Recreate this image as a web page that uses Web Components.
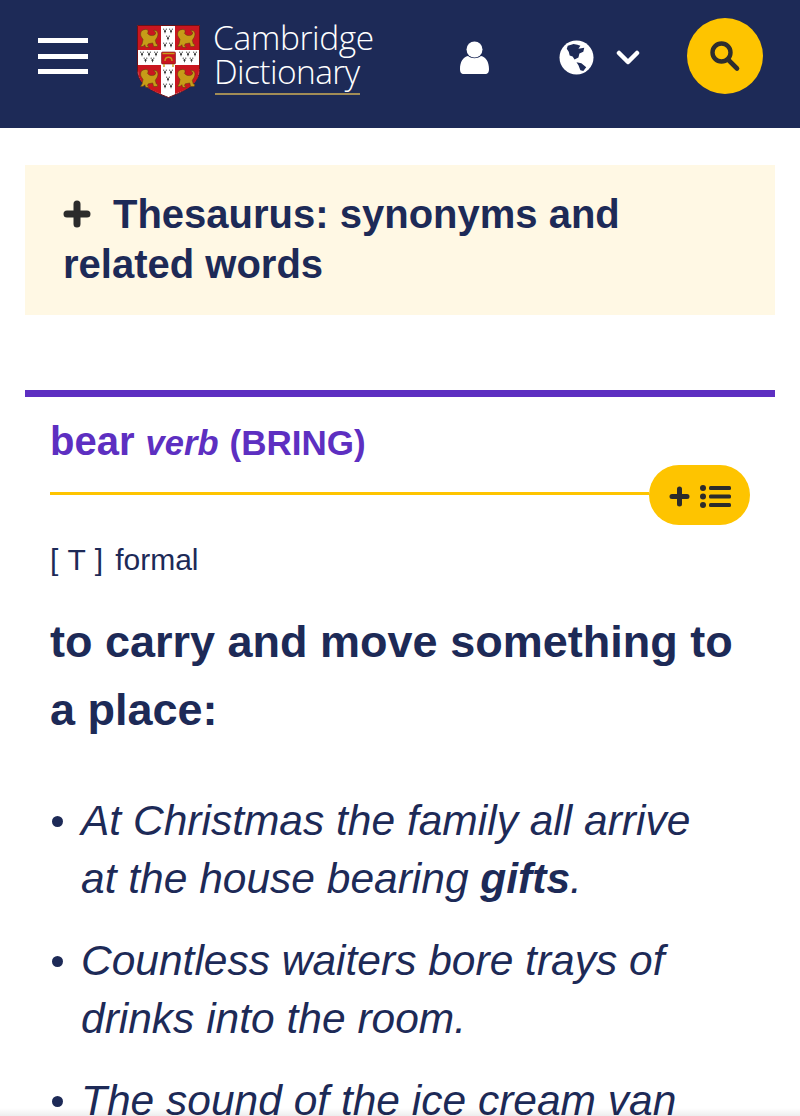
<!DOCTYPE html>
<html lang="en">
<head>
<meta charset="utf-8">
<title>Cambridge Dictionary</title>
<style>
  html, body { margin: 0; padding: 0; background: #fff; }
  body { font-family: "Liberation Sans", Arial, sans-serif; color: #1d2a57; }
</style>
</head>
<body>
<cd-page>
  <cd-header slot="header"></cd-header>
  <cd-thesaurus>Thesaurus: synonyms and related words</cd-thesaurus>
  <cd-sense word="bear" pos="verb" guide="(BRING)" grammar="[ T ]" register="formal">
    <span slot="definition">to carry and move something to a place:</span>
    <cd-example>At Christmas the family all arrive at the house bearing <b>gifts</b>.</cd-example>
    <cd-example>Countless waiters bore trays of drinks into the room.</cd-example>
    <cd-example>The sound of the ice cream van</cd-example>
  </cd-sense>
</cd-page>

<script>
class CdPage extends HTMLElement {
  connectedCallback() {
    this.attachShadow({ mode: 'open' });
    this.shadowRoot.innerHTML = `
      <style>
        :host {
          display: flex;
          flex-direction: column;
          position: relative;
          height: 1116px;
          overflow: hidden;
        }
        ::slotted(cd-header) { flex: none; }
        main {
          flex: none;
          display: flex;
          flex-direction: column;
          padding: 37px 25px 0;
          gap: 75px;
        }
        /* bottom fade, sits over the text */
        .fade {
          position: absolute;
          left: 0;
          right: 0;
          bottom: 0;
          height: 8px;
          background: linear-gradient(rgba(0,0,0,0), rgba(0,0,0,0.07));
        }
      </style>
      <slot name="header"></slot>
      <main><slot></slot></main>
      <div class="fade"></div>
    `;
  }
}

class CdHeader extends HTMLElement {
  connectedCallback() {
    this.attachShadow({ mode: 'open' });
    this.shadowRoot.innerHTML = `
      <style>
        :host {
          display: flex;
          align-items: center;
          height: 128px;
          padding: 0 37px 16px 38px;
          box-sizing: border-box;
          background: #1d2a57;
          color: #fff;
        }
        .burger {
          display: flex;
          flex-direction: column;
          gap: 10.5px;
          width: 50px;
          margin-right: 49px;
        }
        .burger i { display: block; height: 5px; background: #fff; }
        .logo { display: flex; align-items: flex-start; width: 236px; flex: none; margin-top: 10px; }
        .shield { width: 63px; height: 73px; margin: 0 13px 0 0; flex: none; }
        .name {
          display: flex;
          flex-direction: column;
          font-family: "Open Sans", sans-serif;
          font-weight: 300;
          font-size: 33.5px;
          line-height: 34px;
          letter-spacing: -0.4px;
          margin-top: -5px;
        }
        .name span:last-of-type { padding-left: 1px; letter-spacing: -0.6px; }
        .name u {
          display: block;
          height: 2px;
          width: 145px;
          margin: 5px 0 0 2px;
          background: #a18c56;
        }
        .user { width: 31px; height: 33px; margin: 2px 69px 0 86px; flex: none; }
        .globe { width: 35px; height: 35px; margin: 2px 22px 0 0; flex: none; }
        .chev { width: 24px; height: 17px; margin: 2px 47px 0 0; flex: none; }
        .search {
          display: flex;
          align-items: center;
          justify-content: center;
          width: 76px;
          height: 76px;
          border-radius: 50%;
          background: #fec400;
          flex: none;
        }
        .search svg { width: 32px; height: 32px; }
      </style>
      <div class="burger"><i></i><i></i><i></i></div>
      <div class="logo">
        <svg class="shield" viewBox="0 0 63 73">
          <defs>
            <g id="lion" fill="#c79c18" stroke="#5b3d10" stroke-width=".6">
              <path d="M2 4c1-2 5-3 7-2 1 1 1 3 0 4l2 2c3 1 5 1 7-1 1-2 0-3-2-4 3-1 5 1 5 4 0 3-2 5-3 7l1 4 2 1-1 2h-4l-1-4-5 1-1 2 2 2H7l-1-3-2 2H1l2-3 1-5-2-3c-1-2-1-4 0-6z"/>
            </g>
            <g id="ermine" fill="#333">
              <circle cx="0" cy="0" r="1"/><circle cx="-1.300" cy="-1.800" r=".6"/><circle cx="1.300" cy="-1.800" r=".6"/><path d="M-.9 0L0 2.800.9 0z"/>
            </g>
          </defs>
          <path d="M.5.5h62v44c0 14-14 21-31 28C14.500 66 .5 59 .5 45z" fill="#fff" stroke="#6d1115"/>
          <path d="M1 1h23v24H1zM38 1h24v24H38z" fill="#c9161f"/>
          <path d="M1 40h23v29C11 64 1 58 1 45zM38 40h24v5c0 13-10 19-24 24z" fill="#c9161f"/>
          <use href="#lion" transform="translate(2.500 3) scale(.88)"/>
          <use href="#lion" transform="translate(39.500 3) scale(.88)"/>
          <use href="#lion" transform="translate(2.500 43) scale(.88)"/>
          <use href="#lion" transform="translate(39.500 43) scale(.88)"/>
          <use href="#ermine" x="28" y="6"/><use href="#ermine" x="34" y="6"/><use href="#ermine" x="31" y="13"/>
          <use href="#ermine" x="28" y="20"/><use href="#ermine" x="34" y="20"/>
          <use href="#ermine" x="28" y="47"/><use href="#ermine" x="34" y="47"/><use href="#ermine" x="31" y="54"/>
          <use href="#ermine" x="28" y="61"/><use href="#ermine" x="34" y="61"/>
          <use href="#ermine" x="5" y="29"/><use href="#ermine" x="12" y="29"/><use href="#ermine" x="19" y="29"/>
          <use href="#ermine" x="8.500" y="35"/><use href="#ermine" x="15.500" y="35"/>
          <use href="#ermine" x="44" y="29"/><use href="#ermine" x="51" y="29"/><use href="#ermine" x="58" y="29"/>
          <use href="#ermine" x="47.500" y="35"/><use href="#ermine" x="54.500" y="35"/>
          <rect x="24.500" y="27" width="14" height="12" rx="1" fill="#c9161f" stroke="#7a1216" stroke-width=".6"/>
          <path d="M25.500 28.500h12" stroke="#c79c18" stroke-width="1.400"/>
          <path d="M28 36c0-5 7-5 7 0" fill="none" stroke="#c79c18" stroke-width="1.400"/>
          <path d="M27 39v3M36 39v3" stroke="#c79c18" stroke-width="1.400"/>
        </svg>
        <div class="name">
          <span>Cambridge</span>
          <span>Dictionary</span>
          <u></u>
        </div>
      </div>
      <svg class="user" viewBox="0 0 31 33" fill="#fff">
        <circle cx="15.500" cy="8.500" r="8"/>
        <path d="M9 15c4 3 9 3 13 0 5 1 8 6 8 13 0 3-1 5-4 5H5c-3 0-4-2-4-5 0-7 3-12 8-13z"/>
      </svg>
      <svg class="globe" viewBox="0 0 36 36">
        <circle cx="18" cy="18" r="17.500" fill="#fff"/>
        <path d="M9 6l6-2 4 1 3 1-2 3 6-1-1 4-4 2-1 4-4 2-2-3-3-1-1-4-2-3z" fill="#1d2a57"/>
        <path d="M18 23l5 1 5 4-3 4-3-1-2-5z" fill="#1d2a57"/>
      </svg>
      <svg class="chev" viewBox="0 0 24 17" fill="none" stroke="#fff" stroke-width="4.500" stroke-linecap="round" stroke-linejoin="round">
        <path d="M3 4l9 9 9-9"/>
      </svg>
      <div class="search">
        <svg viewBox="0 0 32 32" fill="none" stroke="#2e2e2e" stroke-linecap="round">
          <circle cx="12.500" cy="12.500" r="9" stroke-width="4.400"/>
          <path d="M19 19.500l9 9" stroke-width="4.600"/>
        </svg>
      </div>
    `;
  }
}

class CdThesaurus extends HTMLElement {
  connectedCallback() {
    this.attachShadow({ mode: 'open' });
    this.shadowRoot.innerHTML = `
      <style>
        :host {
          display: block;
          height: 150px;
          box-sizing: border-box;
          padding: 24px 38px 0;
          background: #fff8e4;
          font: bold 40px/50px "Liberation Sans", Arial, sans-serif;
          color: #1d2a57;
        }
        svg {
          width: 28px;
          height: 28px;
          margin-right: 22px;
        }
      </style>
      <svg viewBox="0 0 28 28" fill="none" stroke="#2b2b2b" stroke-width="7" stroke-linecap="round">
        <path d="M14 4v20M4 14h20"/>
      </svg><slot></slot>
    `;
  }
}

class CdSense extends HTMLElement {
  connectedCallback() {
    this.attachShadow({ mode: 'open' });
    const a = (n) => this.getAttribute(n);
    this.shadowRoot.innerHTML = `
      <style>
        :host {
          display: block;
          border-top: 7px solid #5d2fc1;
          padding: 21px 25px 0;
        }
        h2 {
          margin: 0;
          font-size: 40px;
          line-height: 46px;
          font-weight: bold;
          color: #5d2fc1;
        }
        h2 em { font-size: 34.5px; }
        h2 span { font-size: 35px; }
        .rule { display: flex; align-items: center; margin-top: -1px; }
        .rule i { flex: 1; height: 2.5px; margin-bottom: 3px; background: #fec400; }
        .pill {
          display: flex;
          align-items: center;
          justify-content: center;
          gap: 10px;
          width: 101px;
          height: 60px;
          border-radius: 30px;
          background: #fec400;
        }
        .pill svg { margin-top: 3px; }
        .gram {
          margin-top: 16px;
          font-size: 30px;
          line-height: 38px;
        }
        .gram span { margin-right: 12px; word-spacing: 1.3px; }
        .def {
          margin-top: 29px;
          font-size: 45px;
          line-height: 68px;
          font-weight: bold;
        }
        .list { display: block; margin-top: 48px; }
      </style>
      <h2>${a('word')} <em>${a('pos')}</em> <span>${a('guide')}</span></h2>
      <div class="rule">
        <i></i>
        <div class="pill">
          <svg width="21" height="21" viewBox="0 0 21 21" fill="none" stroke="#2b2b2b" stroke-width="5" stroke-linecap="round">
            <path d="M10.500 3v15M3 10.500h15"/>
          </svg>
          <svg width="31" height="23" viewBox="0 0 31 23" fill="#2b2b2b">
            <circle cx="3" cy="3" r="3"/><circle cx="3" cy="11.500" r="3"/><circle cx="3" cy="20" r="3"/>
            <rect x="9" y="1" width="22" height="4" rx="1.500"/><rect x="9" y="9.500" width="22" height="4" rx="1.500"/><rect x="9" y="18" width="22" height="4" rx="1.500"/>
          </svg>
        </div>
      </div>
      <div class="gram"><span>${a('grammar')}</span>${a('register')}</div>
      <div class="def"><slot name="definition"></slot></div>
      <div class="list"><slot></slot></div>
    `;
  }
}

class CdExample extends HTMLElement {
  connectedCallback() {
    this.attachShadow({ mode: 'open' });
    this.shadowRoot.innerHTML = `
      <style>
        :host {
          display: flex;
          margin-bottom: 24px;
          font-size: 42.5px;
          line-height: 58px;
          font-style: italic;
        }
        .dot {
          flex: none;
          width: 11px;
          height: 11px;
          margin: 24px 18px 0 2px;
          border-radius: 50%;
          background: #1d2a57;
        }
        .txt { display: block; width: 620px; }
      </style>
      <span class="dot"></span>
      <span class="txt"><slot></slot></span>
    `;
  }
}

customElements.define('cd-page', CdPage);
customElements.define('cd-header', CdHeader);
customElements.define('cd-thesaurus', CdThesaurus);
customElements.define('cd-sense', CdSense);
customElements.define('cd-example', CdExample);
</script>
</body>
</html>
